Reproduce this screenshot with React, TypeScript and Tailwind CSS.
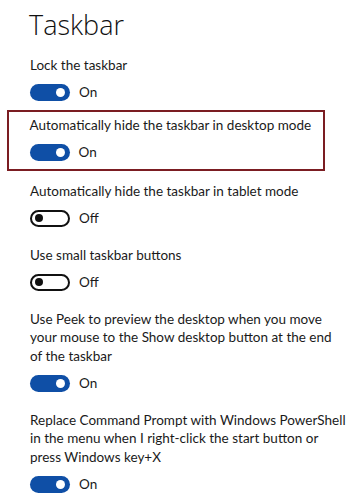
const items: { label: string; on: boolean; highlight?: boolean; wide?: boolean }[] = [
  { label: "Lock the taskbar", on: true },
  { label: "Automatically hide the taskbar in desktop mode", on: true, highlight: true },
  { label: "Automatically hide the taskbar in tablet mode", on: false },
  { label: "Use small taskbar buttons", on: false },
  {
    label: "Use Peek to preview the desktop when you move your mouse to the Show desktop button at the end of the taskbar",
    on: true,
  },
  {
    label: "Replace Command Prompt with Windows PowerShell in the menu when I right-click the start button or press Windows key+X",
    on: true,
    wide: true,
  },
];

const Toggle = ({ on }: { on: boolean }) => (
  <div className="flex items-center h-[20px]">
    {on ? (
      <div className="w-[40px] h-[17px] rounded-full bg-[#0f4fa6] flex items-center justify-end pr-[5px]">
        <div className="w-[9px] h-[9px] rounded-full bg-white" />
      </div>
    ) : (
      <div className="w-[40px] h-[17px] rounded-full border-2 border-[#111] flex items-center pl-[3px]">
        <div className="w-[8px] h-[8px] rounded-full bg-[#111]" />
      </div>
    )}
    <span className="ml-[9px] text-[13.5px] leading-[19px] text-[#1a1a1a]">{on ? "On" : "Off"}</span>
  </div>
);

export default function App() {
  return (
    <div
      className="w-[359px] h-[500px] bg-white pl-[30px] pt-[9px] overflow-hidden"
      style={{ fontFamily: 'Lato, "Open Sans", sans-serif' }}
    >
      <h1
        className="text-[27px] leading-[32px] font-light text-[#111] -ml-[1px]"
        style={{ fontFamily: '"Open Sans", sans-serif' }}
      >
        Taskbar
      </h1>
      <div className="flex flex-col mt-[15px]">
        {items.map((it, i) =>
          it.highlight ? (
            <div
              key={i}
              className="-ml-[23px] w-[318px] border-[2.5px] border-[#7b1d22] pl-[20.5px] pt-[4px] pb-[6px] -mt-[10px] mb-[11px]"
            >
              <p className="text-[13.5px] leading-[18.5px] text-[#1a1a1a]">{it.label}</p>
              <div className="mt-[8px]">
                <Toggle on={it.on} />
              </div>
            </div>
          ) : (
            <div key={i} className={it.wide ? "mb-[17.5px] w-[320px]" : "mb-[17.5px] w-[314px]"}>
              <p className="text-[13.5px] leading-[18.5px] text-[#1a1a1a]">{it.label}</p>
              <div className="mt-[8px]">
                <Toggle on={it.on} />
              </div>
            </div>
          )
        )}
      </div>
    </div>
  );
}
